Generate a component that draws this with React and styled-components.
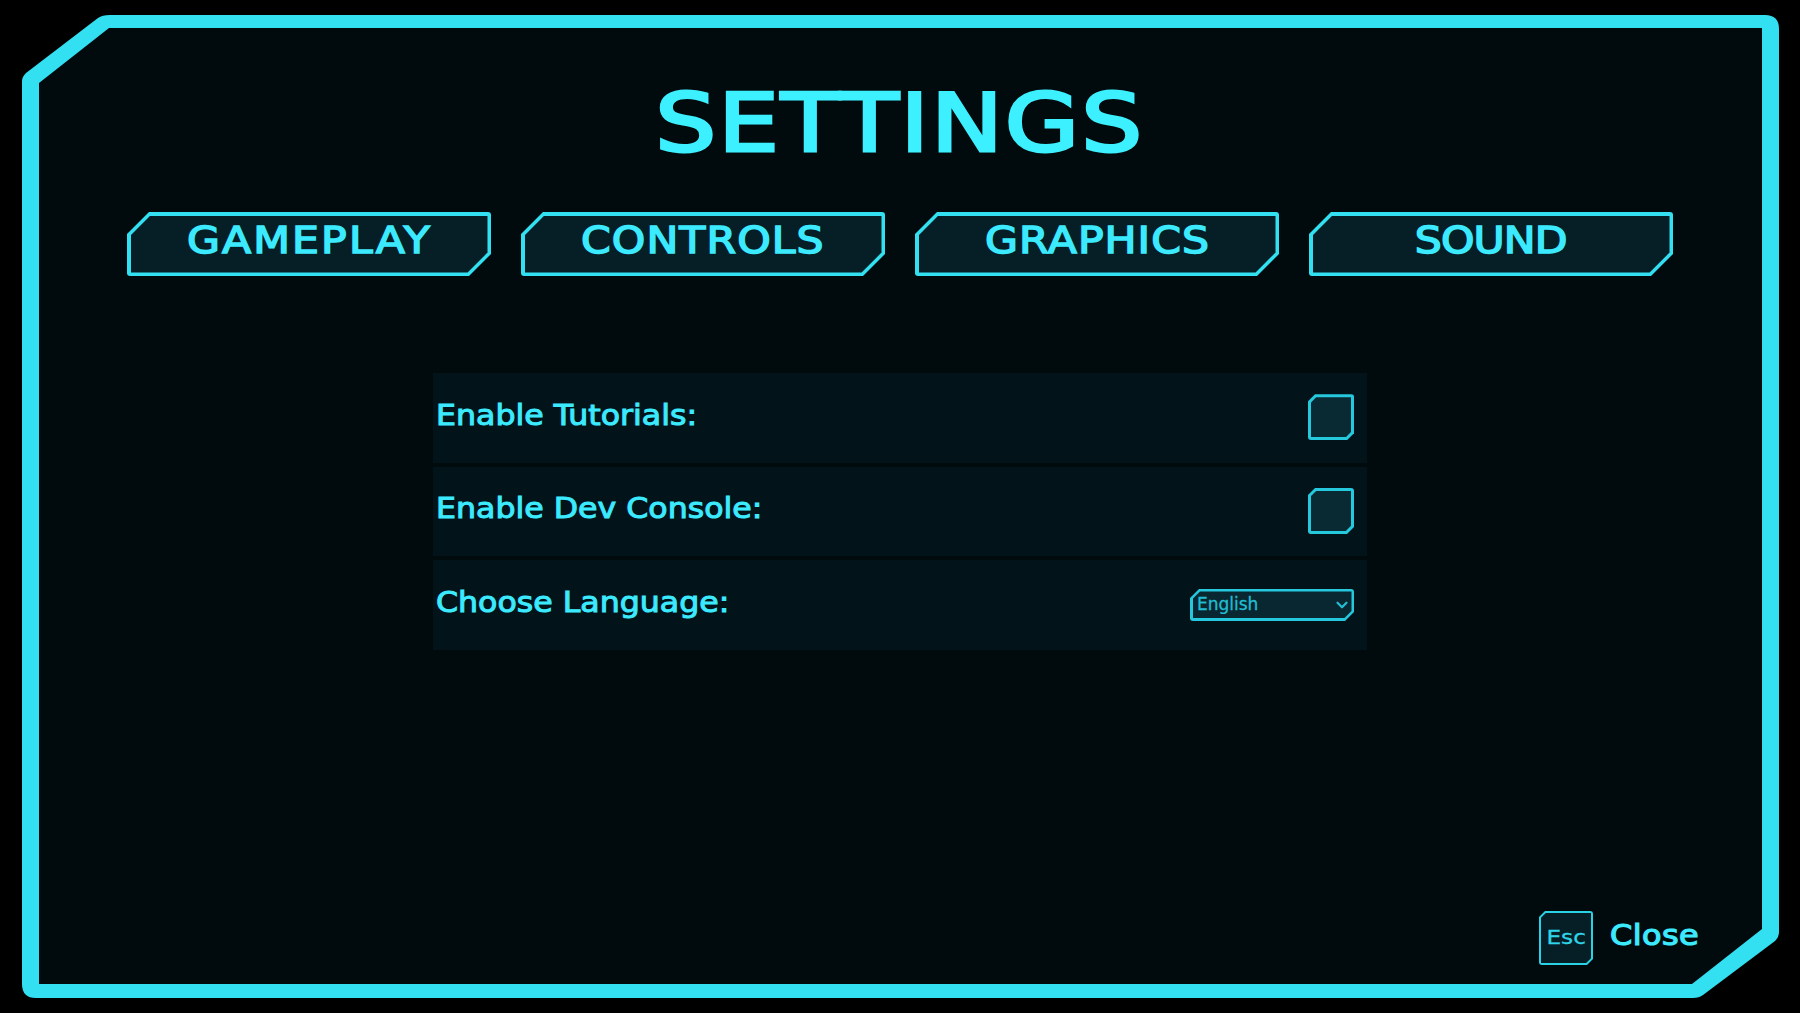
import React from 'react';
import styled, { createGlobalStyle, css } from 'styled-components';
import { ChevronDown } from 'lucide-react';

const CYAN = '#33e0f2';
const FONT = `'DejaVu Sans', 'Liberation Sans', sans-serif`;

const GlobalStyle = createGlobalStyle`
  html, body {
    margin: 0;
    padding: 0;
    background: #000;
  }
  * {
    box-sizing: border-box;
  }
`;

// cut top-left and bottom-right corners, drawn as a border layer and a fill layer
const cutBox = (cut, border, line, fill) => {
  const inner = cut - border * 0.6;
  return css`
    position: relative;
    isolation: isolate;
    background: ${line};
    border-radius: 3px;
    clip-path: polygon(
      ${cut}px 0, 100% 0, 100% calc(100% - ${cut}px),
      calc(100% - ${cut}px) 100%, 0 100%, 0 ${cut}px
    );
    &::before {
      content: '';
      position: absolute;
      inset: ${border}px;
      z-index: -1;
      background: ${fill};
      clip-path: polygon(
        ${inner}px 0, 100% 0, 100% calc(100% - ${inner}px),
        calc(100% - ${inner}px) 100%, 0 100%, 0 ${inner}px
      );
    }
  `;
};

const Page = styled.div`
  width: 1800px;
  height: 1013px;
  padding: 15px 21px 15px 22px;
  background: #000;
  font-family: ${FONT};
  overflow: hidden;
`;

const Frame = styled.div`
  width: 1757px;
  height: 983px;
  padding: 13px 17px 14px 17px;
  background: ${CYAN};
  clip-path: path('M 88 0 L 1743 0 Q 1757 0 1757 14 L 1757 917 Q 1757 922 1753 926 L 1681 980 Q 1677 983 1671 983 L 14 983 Q 0 983 0 969 L 0 66 Q 0 62 4 58 L 76 3 Q 80 0 88 0 Z');
`;

const Panel = styled.main`
  height: 100%;
  display: flex;
  flex-direction: column;
  align-items: center;
  padding: 54px 1px 19px 0;
  background: #010a0d;
  clip-path: polygon(
    70px 0, 100% 0, 100% calc(100% - 55px),
    calc(100% - 70px) 100%, 0 100%, 0 55px
  );
`;

const Title = styled.h1`
  margin: 0;
  height: 84px;
  font-size: 80px;
  line-height: 84px;
  font-weight: 400;
  letter-spacing: 1.7px;
  color: #3df0ff;
  -webkit-text-stroke: 3px #3df0ff;
  transform: scaleX(1.2);
`;

const Tabs = styled.nav`
  display: flex;
  gap: 30px;
  margin-top: 46px;
`;

const Tab = styled.button`
  ${cutBox(22, 3.5, CYAN, '#061e25')}
  width: 364px;
  height: 64px;
  padding: 0 0 9px;
  border: none;
  font-family: ${FONT};
  font-size: 38px;
  line-height: 54px;
  color: #3ceaff;
`;

const TabText = styled.span`
  display: inline-block;
  letter-spacing: ${(p) => p.$spacing}px;
  -webkit-text-stroke: 1.5px #3ceaff;
  transform: scaleX(1.12);
`;

const Rows = styled.section`
  width: 934px;
  display: flex;
  flex-direction: column;
  gap: 4px;
  margin-top: 97px;
`;

const Row = styled.div`
  height: 89.6px;
  display: flex;
  align-items: center;
  justify-content: space-between;
  padding: 0 13px 0 3px;
  background: #02141a;
`;

const Label = styled.span`
  display: inline-block;
  font-size: 29px;
  line-height: 34px;
  margin-top: -6.5px;
  color: #3ceaff;
  -webkit-text-stroke: 1px #3ceaff;
  transform: scaleX(1.09);
  transform-origin: left center;
`;

const CheckBox = styled.div`
  ${cutBox(7, 3, '#25c8dc', '#0a2a33')}
  width: 46px;
  height: 46px;
  margin-top: -1px;
`;

const LanguageBox = styled.div`
  ${cutBox(9, 2.5, '#25c8dc', '#082730')}
  width: 164px;
  height: 32px;
  display: flex;
  align-items: center;
  color: #22bdd2;
`;

const LanguageSelect = styled.select`
  flex: 1;
  height: 100%;
  padding: 0 0 2px 7px;
  border: none;
  outline: none;
  appearance: none;
  background: transparent;
  font-family: ${FONT};
  font-size: 17px;
  color: #22bdd2;
  -webkit-text-stroke: 0.3px #22bdd2;
`;

const Chevron = styled(ChevronDown)`
  position: absolute;
  right: 3px;
  top: 7px;
  pointer-events: none;
`;

const Footer = styled.footer`
  margin-top: auto;
  align-self: flex-end;
  display: flex;
  align-items: center;
  gap: 17px;
  padding-right: 70px;
`;

const KeyCap = styled.div`
  ${cutBox(6, 2, '#2ad2e6', '#061e25')}
  width: 54px;
  height: 54px;
  display: flex;
  align-items: center;
  justify-content: center;
  color: #2fd4e8;
`;

const KeyText = styled.span`
  display: inline-block;
  font-size: 19px;
  margin-top: -3px;
  -webkit-text-stroke: 0.3px #2fd4e8;
  transform: scaleX(1.22);
`;

const CloseText = styled.span`
  display: inline-block;
  width: 81px;
  font-size: 29px;
  line-height: 34px;
  letter-spacing: 0.4px;
  margin-top: -6px;
  color: #3ceaff;
  -webkit-text-stroke: 1.2px #3ceaff;
  transform: scaleX(1.1);
  transform-origin: left center;
`;

const tabs = [
  { name: 'GAMEPLAY', spacing: 1.9 },
  { name: 'CONTROLS', spacing: 1 },
  { name: 'GRAPHICS', spacing: 0.9 },
  { name: 'SOUND', spacing: -0.8 },
];

export default function App() {
  return (
    <Page>
      <GlobalStyle />
      <Frame>
        <Panel>
          <Title>SETTINGS</Title>
          <Tabs>
            {tabs.map((tab) => (
              <Tab key={tab.name}>
                <TabText $spacing={tab.spacing}>{tab.name}</TabText>
              </Tab>
            ))}
          </Tabs>
          <Rows>
            <Row>
              <Label>Enable Tutorials:</Label>
              <CheckBox />
            </Row>
            <Row>
              <Label>Enable Dev Console:</Label>
              <CheckBox />
            </Row>
            <Row>
              <Label>Choose Language:</Label>
              <LanguageBox>
                <LanguageSelect defaultValue="English">
                  <option>English</option>
                </LanguageSelect>
                <Chevron size={18} strokeWidth={3} />
              </LanguageBox>
            </Row>
          </Rows>
          <Footer>
            <KeyCap>
              <KeyText>Esc</KeyText>
            </KeyCap>
            <CloseText>Close</CloseText>
          </Footer>
        </Panel>
      </Frame>
    </Page>
  );
}
